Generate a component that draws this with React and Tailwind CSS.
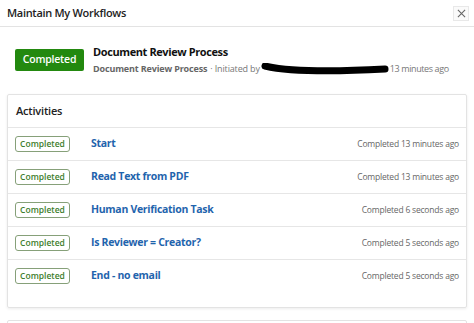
import React from 'react';

const activities = [
  { name: 'Start', when: 'Completed 13 minutes ago' },
  { name: 'Read Text from PDF', when: 'Completed 13 minutes ago' },
  { name: 'Human Verification Task', when: 'Completed 6 seconds ago' },
  { name: 'Is Reviewer = Creator?', when: 'Completed 5 seconds ago' },
  { name: 'End - no email', when: 'Completed 5 seconds ago' },
];

const ActivityRow = ({ activity }) => (
  <div className="h-[33px] flex items-center border-t border-[#e6e6e6] pl-[7px] pr-[7px]">
    <span className="w-[55px] h-[16px] flex items-center justify-center border border-[#86a079] rounded-[3px] text-[8.5px] font-semibold text-[#3d7d2c] leading-none">
      Completed
    </span>
    <span className="ml-[21px] text-[10.5px] font-bold text-[#1f64ad] tracking-[-0.3px]">{activity.name}</span>
    <span className="ml-auto text-[8.5px] text-[#666] tracking-[-0.2px]">{activity.when}</span>
  </div>
);

const App = () => (
  <div className="w-[474px] h-[323px] overflow-hidden bg-white" style={{ fontFamily: '"Open Sans", "Noto Sans", sans-serif' }}>
    <div className="h-[27px] flex items-center justify-between pl-[7px] pr-[5px] border-b border-[#e3e3e3]">
      <span className="text-[11px] font-semibold text-[#222] tracking-[-0.3px]">Maintain My Workflows</span>
      <button className="w-[16px] h-[15px] flex items-center justify-center border border-[#e8e8e8] bg-[#fafafa] text-[#666]">
        <svg width="9" height="9" viewBox="0 0 10 10" stroke="currentColor" strokeWidth="1.2">
          <path d="M1 1L9 9M9 1L1 9" />
        </svg>
      </button>
    </div>

    <div className="flex items-center pl-[15px] pt-[17px] pb-[18px]">
      <span className="w-[69px] h-[22px] flex items-center justify-center bg-[#23890f] rounded-[2px] text-white text-[10.5px] font-semibold tracking-[-0.2px]">
        Completed
      </span>
      <div className="ml-[9px] flex flex-col">
        <span className="text-[11px] font-bold text-[#111] leading-[15px] tracking-[-0.4px]">Document Review Process</span>
        <div className="flex items-center text-[9px] text-[#777] leading-[15px] mt-[2px] tracking-[-0.15px]">
          <span className="font-bold text-[#666]">Document Review Process</span>
          <span className="ml-[3px]">· Initiated by</span>
          <svg width="128" height="12" viewBox="0 0 128 12" className="ml-[1px]">
            <path d="M4 3 C 30 9, 70 9, 124 6" stroke="#000" strokeWidth="7" strokeLinecap="round" fill="none" />
          </svg>
          <span className="ml-[1px] tracking-[-0.4px]">13 minutes ago</span>
        </div>
      </div>
    </div>

    <div className="mx-[7px] border border-[#e3e3e3] rounded-[2px] shadow-[0_1px_3px_rgba(0,0,0,0.08)] pb-[15px]">
      <div className="h-[32px] flex items-center pl-[8px] text-[11px] font-semibold text-[#222] tracking-[-0.2px]">Activities</div>
      {activities.map((activity) => (
        <ActivityRow key={activity.name} activity={activity} />
      ))}
    </div>

    <div className="mx-[7px] mt-[12px] h-[20px] border border-[#e3e3e3] rounded-[2px]" />
  </div>
);

export default App;
